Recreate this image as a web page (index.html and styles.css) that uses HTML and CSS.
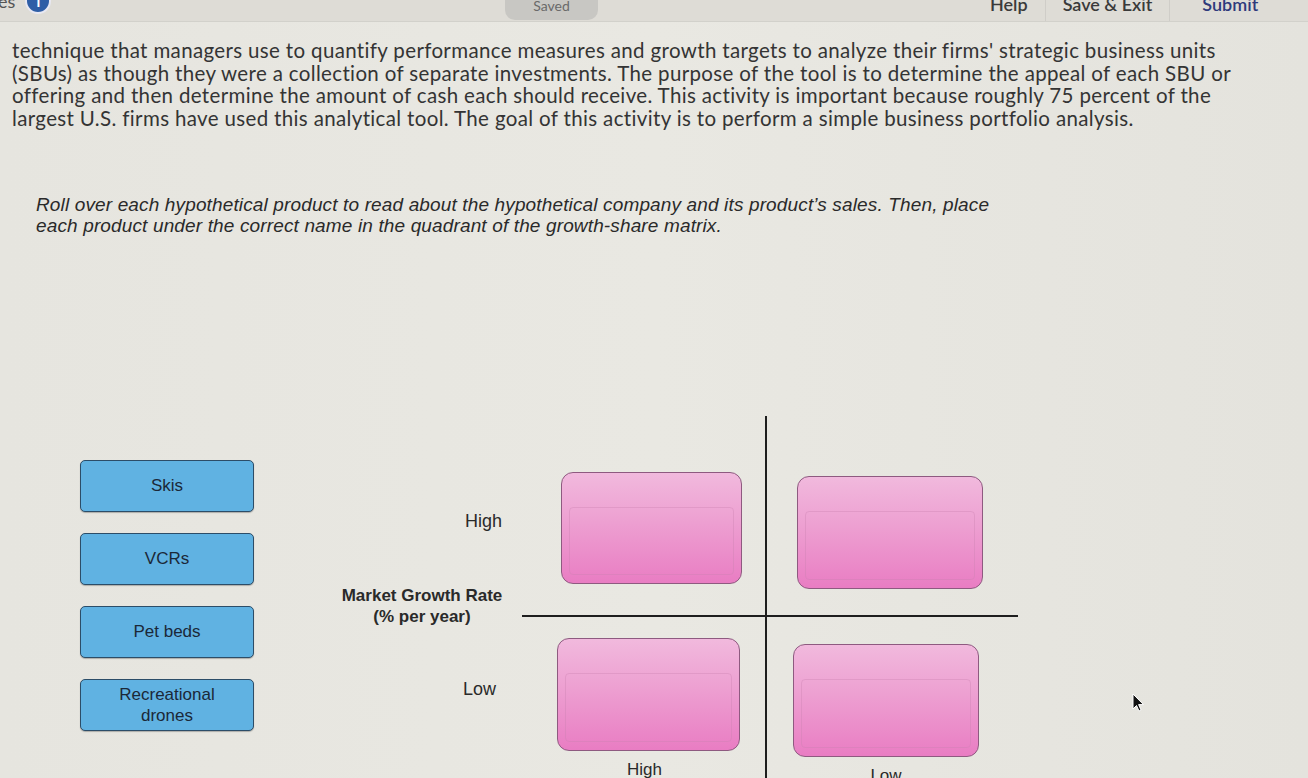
FILE: index.html
```html
<!DOCTYPE html>
<html>
<head>
<meta charset="utf-8">
<link rel="stylesheet" href="styles.css">
</head>
<body>
<header class="topbar">
  <div class="left">
    <span class="crumb">es</span>
    <span class="info">i</span>
  </div>
  <div class="saved">Saved</div>
  <nav class="actions">
    <span class="act">Help</span>
    <span class="sep"></span>
    <span class="act">Save &amp; Exit</span>
    <span class="sep"></span>
    <span class="act submit">Submit</span>
  </nav>
</header>

<p class="intro">
  <span class="ln">technique that managers use to quantify performance measures and growth targets to analyze their firms' strategic business units</span>
  <span class="ln">(SBUs) as though they were a collection of separate investments. The purpose of the tool is to determine the appeal of each SBU or</span>
  <span class="ln">offering and then determine the amount of cash each should receive. This activity is important because roughly 75 percent of the</span>
  <span class="ln">largest U.S. firms have used this analytical tool. The goal of this activity is to perform a simple business portfolio analysis.</span>
</p>

<p class="instr">
  <span class="ln">Roll over each hypothetical product to read about the hypothetical company and its product’s sales. Then, place</span>
  <span class="ln">each product under the correct name in the quadrant of the growth-share matrix.</span>
</p>

<section class="work">
  <div class="products">
    <div class="prod">Skis</div>
    <div class="prod">VCRs</div>
    <div class="prod">Pet beds</div>
    <div class="prod">Recreational<br>drones</div>
  </div>
  <div class="labels">
    <div class="lab-high">High</div>
    <div class="lab-axis">Market Growth Rate<br>(% per year)</div>
    <div class="lab-low">Low</div>
  </div>
  <div class="matrix">
    <div class="cell tl"><div class="box"><div class="inner"></div></div></div>
    <div class="cell tr"><div class="box w2"><div class="inner"></div></div></div>
    <div class="cell bl"><div class="box w3"><div class="inner"></div></div><div class="xlab">High</div></div>
    <div class="cell br"><div class="box w2"><div class="inner"></div></div><div class="xlab">Low</div></div>
  </div>
</section>

<svg class="cursor" width="16" height="20" viewBox="0 0 16 20">
  <path d="M2 1 L2 16 L5.5 12.5 L8 18 L10 17 L7.6 11.6 L12.5 11.6 Z" fill="#111" stroke="#fff" stroke-width="1"/>
</svg>
</body>
</html>
```

FILE: styles.css
```css
html, body {
  margin: 0;
  padding: 0;
}
body {
  width: 1308px;
  height: 778px;
  overflow: hidden;
  background: linear-gradient(90deg, #e6e5df 0%, #e9e8e2 50%, #e4e3dd 100%);
  font-family: "Liberation Sans", Arial, sans-serif;
  color: #2a2a2a;
  position: relative;
}
.topbar {
  height: 21px;
  display: flex;
  align-items: flex-start;
  background: #dedcd6;
  border-bottom: 1px solid #d2d1cb;
  overflow: hidden;
  position: relative;
}
.left {
  display: flex;
  align-items: center;
  margin-top: -12px;
  gap: 10px;
  width: 505px;
  font-family: Lato, sans-serif;
  font-size: 18px;
  color: #555;
}
.crumb { margin-left: -2px; }
.info {
  width: 22px;
  height: 22px;
  border-radius: 50%;
  background: #2f5ea6;
  border: 2px solid #e8e8f2;
  color: #fff;
  font-weight: bold;
  font-size: 15px;
  display: flex;
  align-items: center;
  justify-content: center;
}
.saved {
  width: 93px;
  height: 30px;
  margin-top: -10px;
  border-radius: 10px;
  background: #c8c7c3;
  color: #6a6a6a;
  font-family: Lato, sans-serif;
  font-size: 14px;
  display: flex;
  align-items: flex-end;
  justify-content: center;
  padding-bottom: 6px;
  box-sizing: border-box;
}
.actions {
  display: flex;
  align-items: flex-start;
  margin-left: 392px;
  margin-top: -6px;
  font-family: Lato, sans-serif;
  font-size: 18px;
  font-weight: 600;
  color: #3a3a3a;
}
.act { line-height: 20px; }
.sep {
  width: 1px;
  height: 28px;
  background: #cfcdc8;
  margin: 0 17px;
}
.submit { color: #2e3a7c; margin-left: 15px; }

.intro {
  margin: 17px 0 0 12px;
  font-family: Lato, sans-serif;
  font-size: 20.5px;
  letter-spacing: 0.35px;
  line-height: 22.7px;
  color: #343434;
}
.ln { display: block; white-space: nowrap; }

.instr {
  margin: 64px 0 0 36px;
  font-family: "Liberation Sans", Arial, sans-serif;
  font-style: italic;
  font-size: 19px;
  letter-spacing: 0.14px;
  line-height: 21px;
  color: #2a2a2a;
}

.work {
  display: flex;
  align-items: flex-start;
  margin-top: 180px;
}
.products {
  display: flex;
  flex-direction: column;
  gap: 21px;
  margin-left: 80px;
  padding-top: 44px;
  width: 174px;
}
.prod {
  height: 52px;
  box-sizing: border-box;
  background: #60b2e2;
  border: 1.5px solid #2c4d68;
  border-radius: 5px;
  box-shadow: 0 1px 1px rgba(0,0,0,0.25);
  display: flex;
  align-items: center;
  justify-content: center;
  text-align: center;
  font-size: 17px;
  line-height: 21px;
  color: #1b2838;
}
.labels {
  width: 170px;
  margin-left: 83px;
  display: flex;
  flex-direction: column;
  align-items: flex-end;
  font-size: 18px;
  color: #2a2a2a;
}
.lab-high { margin-top: 95px; margin-right: 5px; }
.lab-axis {
  margin-top: 53px;
  align-self: stretch;
  text-align: center;
  font-weight: bold;
  font-size: 17px;
  line-height: 21px;
}
.lab-low { margin-top: 52px; margin-right: 11px; }

.matrix {
  margin-left: 15px;
  display: grid;
  grid-template-columns: 245px 251px;
  grid-template-rows: 201px auto;
}
.cell { box-sizing: border-box; }
.tl { border-right: 2px solid #1e1e1e; border-bottom: 2px solid #1e1e1e; padding: 56px 0 0 39px; }
.tr { border-bottom: 2px solid #1e1e1e; padding: 60px 0 0 30px; }
.bl { border-right: 2px solid #1e1e1e; padding: 21px 0 0 35px; height: 178px; }
.br { padding: 27px 0 0 26px; }
.box {
  width: 181px;
  height: 112px;
  box-sizing: border-box;
  border: 1.5px solid #8e5a80;
  border-radius: 12px;
  background: linear-gradient(180deg, #f1b9dd 0%, #ed9fd1 45%, #e97dc3 100%);
  padding: 34px 7px 10px 7px;
}
.w2 { width: 186px; height: 113px; }
.w3 { width: 183px; height: 113px; }
.inner {
  height: 100%;
  border: 1px solid rgba(200, 130, 175, 0.35);
  border-radius: 4px;
}
.xlab {
  font-size: 17px;
  text-align: center;
  margin-top: 9px;
}
.bl .xlab { width: 183px; margin-left: -4px; }
.br .xlab { width: 186px; }

.cursor {
  position: absolute;
  left: 1131px;
  top: 693px;
}
```
